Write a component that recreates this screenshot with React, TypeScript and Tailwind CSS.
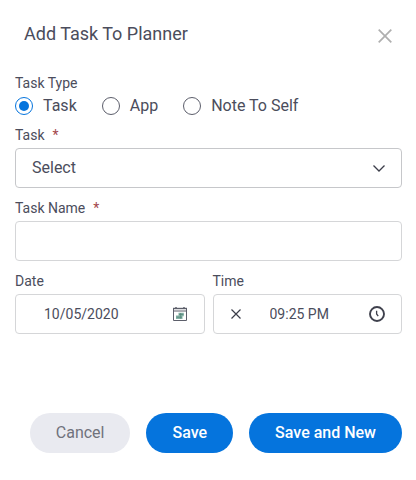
import { useState } from "react";
import type { ReactNode } from "react";

const taskTypes = ["Task", "App", "Note To Self"];

const fieldClass = "h-10 w-full rounded border border-[#d5d6d8] bg-white text-[#4b4d5c]";

function Label({ htmlFor, required, children }: { htmlFor: string; required?: boolean; children: ReactNode }) {
  return (
    <label htmlFor={htmlFor} className="mb-[3px] block text-sm leading-5">
      {children}
      {required && <span className="ml-2 text-[#a3474b]">*</span>}
    </label>
  );
}

function CloseIcon({ className }: { className: string }) {
  return (
    <svg viewBox="0 0 14 14" className={className} fill="none" stroke="currentColor" strokeWidth="1.7" aria-hidden="true">
      <path d="M.7.7l12.6 12.6M13.3.7L.7 13.3" />
    </svg>
  );
}

function CalendarIcon() {
  return (
    <svg viewBox="0 0 14 14" className="size-3.5" fill="none" aria-hidden="true">
      <path d="M.5 1.5h13v12H.5z" stroke="#5c5e6a" />
      <path d="M0 1.5h14" stroke="#5c5e6a" strokeWidth="1.4" />
      <path d="M0 4h14" stroke="#5c5e6a" />
      <path d="M3 0v2M11 0v2" stroke="#5c5e6a" strokeWidth="1.4" />
      <path d="M5.5 5.8h5.3v3.4H9.5v2.8H3V8.5h2.5z" fill="#86b3a6" />
      <path d="M6 7.4h4.5M3.5 10.2h5.5M7.7 6v5.5" stroke="#54857b" strokeWidth=".8" />
    </svg>
  );
}

function ClockIcon() {
  return (
    <svg viewBox="0 0 16 16" className="size-4" fill="none" stroke="#3f414d" aria-hidden="true">
      <circle cx="8" cy="8" r="7" strokeWidth="1.9" />
      <path d="M7.6 4.8V8l1.6 2.2" strokeWidth="1.3" />
    </svg>
  );
}

export default function App() {
  const [taskType, setTaskType] = useState("Task");
  const [date, setDate] = useState("10/05/2020");
  const [time, setTime] = useState("09:25 PM");

  return (
    <form
      className="min-h-screen bg-white pt-[18px] pr-3.5 pb-7 pl-[15px] font-['Roboto',sans-serif] text-[#4b4d5c]"
      onSubmit={(e) => e.preventDefault()}
    >
      <header className="flex h-8 items-center justify-between pr-2.5 pl-[9px]">
        <h1 className="text-lg leading-7">Add Task To Planner</h1>
        <button type="button" aria-label="Close" className="pt-1 text-[#afafaf]">
          <CloseIcon className="size-3.5" />
        </button>
      </header>

      <fieldset className="mt-[23px]">
        <legend className="mb-[3px] text-sm leading-5">Task Type</legend>
        <div className="flex gap-[25px]">
          {taskTypes.map((type) => (
            <label key={type} className="flex h-5 items-center gap-2.5 text-base leading-5">
              <input
                type="radio"
                name="taskType"
                value={type}
                checked={taskType === type}
                onChange={() => setTaskType(type)}
                className="size-[18px] appearance-none rounded-full border border-[#5c5e6b] bg-white bg-clip-content p-[3px] checked:border-[#0574dd] checked:bg-[#0574dd]"
              />
              {type}
            </label>
          ))}
        </div>
      </fieldset>

      <div className="mt-[9px]">
        <Label htmlFor="task" required>Task</Label>
        <div className="grid items-center">
          <select
            id="task"
            className="col-start-1 row-start-1 h-10 w-full appearance-none rounded border border-[#c6c7ca] bg-white px-4 text-base text-[#4b4d5c]"
          >
            <option>Select</option>
          </select>
          <svg
            viewBox="0 0 12 7"
            className="pointer-events-none col-start-1 row-start-1 mr-[17px] h-[7px] w-3 justify-self-end"
            fill="none"
            stroke="#3b3d49"
            strokeWidth="1.3"
            aria-hidden="true"
          >
            <path d="M.5.5L6 6 11.5.5" />
          </svg>
        </div>
      </div>

      <div className="mt-2.5">
        <Label htmlFor="taskName" required>Task Name</Label>
        <input id="taskName" type="text" className={`${fieldClass} px-4 text-base`} />
      </div>

      <div className="mt-2.5 grid grid-cols-2 gap-2">
        <div>
          <Label htmlFor="date">Date</Label>
          <div className={`${fieldClass} flex items-center pr-[17px] pl-7`}>
            <input
              id="date"
              type="text"
              value={date}
              onChange={(e) => setDate(e.target.value)}
              className="min-w-0 flex-1 text-sm outline-none"
            />
            <button type="button" aria-label="Open calendar">
              <CalendarIcon />
            </button>
          </div>
        </div>
        <div>
          <Label htmlFor="time">Time</Label>
          <div className={`${fieldClass} flex items-center px-4`}>
            <button type="button" aria-label="Clear time" className="px-px text-[#3b3d49]" onClick={() => setTime("")}>
              <CloseIcon className="size-2.5" />
            </button>
            <input
              id="time"
              type="text"
              value={time}
              onChange={(e) => setTime(e.target.value)}
              className="ml-7 min-w-0 flex-1 text-sm outline-none"
            />
            <button type="button" aria-label="Choose time">
              <ClockIcon />
            </button>
          </div>
        </div>
      </div>

      <footer className="mt-[79px] flex justify-end gap-4 text-base">
        <button type="button" className="h-10 rounded-full bg-[#e9eaf0] px-[26px] text-[#70727c]">
          Cancel
        </button>
        <button type="submit" className="h-10 rounded-full bg-[#0574dd] px-[26px] font-medium text-white">
          Save
        </button>
        <button type="submit" className="h-10 rounded-full bg-[#0574dd] px-[26px] font-medium text-white">
          Save and New
        </button>
      </footer>
    </form>
  );
}
